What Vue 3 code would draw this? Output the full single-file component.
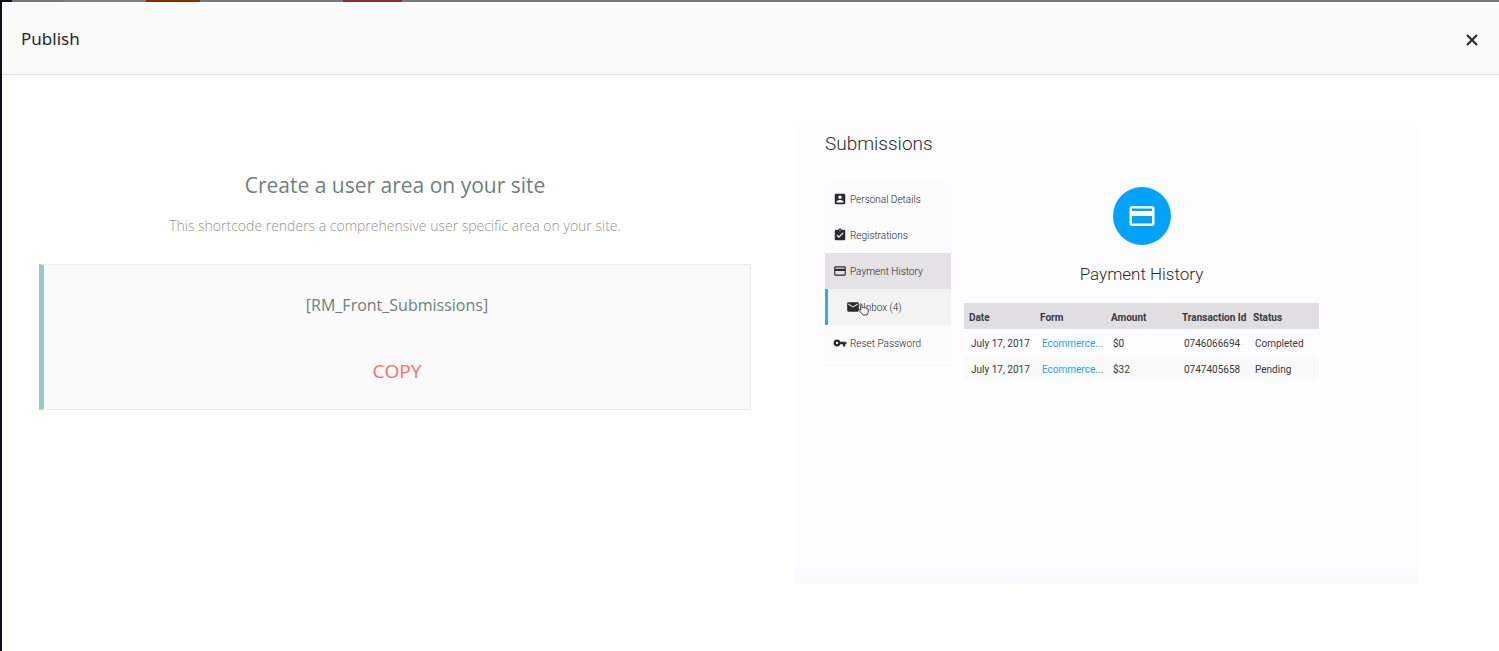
<script setup>
const items = [
  { id: 'personal', label: 'Personal Details' },
  { id: 'registrations', label: 'Registrations' },
  { id: 'payments', label: 'Payment History', active: true },
  { id: 'inbox', label: 'Inbox (4)', sub: true },
  { id: 'password', label: 'Reset Password' },
]
const heads = ['Date', 'Form', 'Amount', 'Transaction Id', 'Status']
const rows = [
  { date: 'July 17, 2017', form: 'Ecommerce...', amount: '$0', id: '0746066694', status: 'Completed' },
  { date: 'July 17, 2017', form: 'Ecommerce...', amount: '$32', id: '0747405658', status: 'Pending' },
]
</script>

<template>
  <div class="page">
    <div class="backdrop" aria-hidden="true">
      <i class="seg ink"></i><i class="seg tab"></i><i class="seg bar"></i><i class="seg orange"></i>
      <i class="seg mid"></i><i class="seg red"></i><i class="seg rest"></i>
    </div>
    <section class="modal" role="dialog" aria-labelledby="dialog-title">
      <header class="head">
        <h1 id="dialog-title">Publish</h1>
        <button class="close" type="button" aria-label="Close">
          <svg width="14" height="14" viewBox="0 0 14 14"><path d="M2 2l10 10M12 2L2 12" fill="none" stroke="#23282d" stroke-width="2" /></svg>
        </button>
      </header>
      <div class="body">
        <div class="info">
          <h2>Create a user area on your site</h2>
          <p class="desc">This shortcode renders a comprehensive user specific area on your site.</p>
          <div class="codebox">
            <div class="code">[RM_Front_Submissions]</div>
            <button class="copy" type="button">COPY</button>
          </div>
        </div>
        <div class="preview">
          <h3 class="ptitle">Submissions</h3>
          <div class="pgrid">
            <nav class="side">
              <a v-for="it in items" :key="it.id" href="#" class="item" :class="{ active: it.active, sub: it.sub }">
                <svg class="ico" width="14" height="14" viewBox="0 0 24 24" fill="#2c2b2f">
                  <path v-if="it.id === 'personal'" d="M3 5v14a2 2 0 0 0 2 2h14a2 2 0 0 0 2-2V5a2 2 0 0 0-2-2H5a2 2 0 0 0-2 2zm12 4a3 3 0 1 1-6 0 3 3 0 0 1 6 0zm-9 8c0-2 4-3.100 6-3.100s6 1.100 6 3.100v1H6v-1z" />
                  <path v-else-if="it.id === 'registrations'" d="M19 3h-4.180C14.400 1.840 13.300 1 12 1s-2.400.84-2.820 2H5a2 2 0 0 0-2 2v14a2 2 0 0 0 2 2h14a2 2 0 0 0 2-2V5a2 2 0 0 0-2-2zm-7 0a1 1 0 1 1 0 2 1 1 0 0 1 0-2zm-2 14l-4-4 1.410-1.410L10 14.170l6.590-6.590L18 9l-8 8z" />
                  <path v-else-if="it.id === 'payments'" d="M20 4H4a2 2 0 0 0-2 2v12a2 2 0 0 0 2 2h16a2 2 0 0 0 2-2V6a2 2 0 0 0-2-2zm0 14H4v-6h16v6zm0-10H4V6h16v2z" />
                  <path v-else-if="it.id === 'inbox'" d="M20 4H4a2 2 0 0 0-2 2v12a2 2 0 0 0 2 2h16a2 2 0 0 0 2-2V6a2 2 0 0 0-2-2zm0 4l-8 5-8-5V6l8 5 8-5v2z" />
                  <path v-else d="M12.650 10A6 6 0 0 0 7 6a6 6 0 1 0 5.650 8H17v4h4v-4h2v-4H12.650zM7 14a2 2 0 1 1 0-4 2 2 0 0 1 0 4z" />
                </svg>
                <span>{{ it.label }}</span>
                <svg v-if="it.sub" class="hand" width="12" height="13" viewBox="0 0 12 13">
                  <path d="M2 1.500c0-1 1.500-1 1.700 0l.5 3.500 1-.8 1.300.6 1.400-.1 1.200.8 1.100.5v3.500L9 12H5L1 7.500c-.4-.8.600-1.400 1.300-.8l.7.6z" fill="#f3f1f3" stroke="#444347" />
                </svg>
              </a>
            </nav>
            <div class="main">
              <div class="disc">
                <svg width="30" height="30" viewBox="0 0 24 24" fill="#fff"><path d="M20 4H4a2 2 0 0 0-2 2v12a2 2 0 0 0 2 2h16a2 2 0 0 0 2-2V6a2 2 0 0 0-2-2zm0 14H4v-6h16v6zm0-10H4V6h16v2z" /></svg>
              </div>
              <h4>Payment History</h4>
              <table>
                <thead>
                  <tr><th v-for="h in heads" :key="h" scope="col">{{ h }}</th></tr>
                </thead>
                <tbody>
                  <tr v-for="r in rows" :key="r.id">
                    <td>{{ r.date }}</td>
                    <td><a href="#">{{ r.form }}</a></td>
                    <td>{{ r.amount }}</td>
                    <td>{{ r.id }}</td>
                    <td>{{ r.status }}</td>
                  </tr>
                </tbody>
              </table>
            </div>
          </div>
        </div>
      </div>
    </section>
  </div>
</template>

<style>
body { margin: 0; background: #0c0e15; }
</style>

<style scoped>
* { box-sizing: border-box; }
h1, h2, h3, h4, p { margin: 0; font-weight: 400; }
a { text-decoration: none; color: inherit; }
button { border: 0; background: none; padding: 0; font: inherit; }
.page { min-height: 100vh; display: flex; flex-direction: column; font-family: "Open Sans", "Noto Sans", sans-serif; }
.backdrop { display: flex; height: 2px; }
.seg { flex: none; height: 2px; background: #7b7a7a; }
.ink { width: 12px; background: #0d1116; }
.tab { width: 51px; background: #777575; }
.bar { width: 83px; background: #817d7c; }
.orange { width: 54px; background: #833000; }
.mid { width: 143px; }
.red { width: 59px; background: #823035; }
.rest { flex: 1; }
.modal { flex: 1; margin-left: 2px; background: #fffffe; }
.head {
  display: flex; align-items: center; justify-content: space-between;
  height: 73px; padding: 0 20px 0 19px;
  background: #fafafb; border-bottom: 1px solid #e1e2e4; box-shadow: 0 2px 0 #fcfcfc;
}
h1 { padding-top: 2px; font-family: "Noto Sans", sans-serif; font-size: 17px; line-height: 24px; color: #23282d; }
.close { display: flex; padding-top: 4px; }
.body { display: grid; grid-template-columns: 712fr 625fr; gap: 43px; padding: 52px 80px 60px 37px; align-items: start; }
.info { padding-top: 42px; text-align: center; }
h2 { font-size: 21px; line-height: 32px; color: #6f7f7f; }
.desc { margin-top: 14px; font-size: 14px; line-height: 22px; font-weight: 300; color: #949494; }
.codebox {
  display: flex; flex-direction: column; align-items: center; gap: 40px;
  height: 146px; margin-top: 27px; padding-top: 27px;
  background: #fafafb; border: 1px solid #ececee; border-left: 5px solid #95cbc7;
}
.code { font-size: 16px; line-height: 26px; color: #6f7f7f; }
.copy { font-size: 19px; line-height: 26px; color: #ff6c6c; }
.preview {
  min-height: 457px; padding: 4px 20px 0 31px; font-family: Roboto, sans-serif;
  background: linear-gradient(to top, #f8f8f9, #fdfdff 16px, #fdfdff 120px, #fdfcff 124px);
}
.ptitle { font-size: 19px; line-height: 26px; font-weight: 300; color: #2c2b2f; }
.pgrid { display: grid; grid-template-columns: 126px minmax(0, 355px); gap: 13px; margin-top: 24px; align-items: start; }
.side { display: flex; flex-direction: column; background: #fcfbfc; }
.item {
  position: relative; display: flex; align-items: center; gap: 3px; height: 36px; padding-left: 8px;
  font-size: 10px; font-weight: 300; color: #1c1b1f; white-space: nowrap;
}
.active { background: #e4e2e5; }
.sub { padding-left: 18px; background: #f4f3f4; border-left: 3px solid #2fadea; }
.hand { position: absolute; left: 30px; top: 14px; }
.main { display: flex; flex-direction: column; align-items: center; padding-top: 6px; }
.disc { display: flex; align-items: center; justify-content: center; width: 58px; height: 58px; border-radius: 50%; background: #03a3fd; }
h4 { margin-top: 16px; font-size: 17px; line-height: 26px; font-weight: 300; color: #2c2b2f; }
table { width: 100%; margin-top: 16px; table-layout: fixed; border-collapse: collapse; font-size: 10px; color: #39383c; }
tr { height: 26px; }
th { padding: 2px 0 0 5px; text-align: left; font-weight: 700; background: #e0dee0; white-space: nowrap; }
td { padding: 2px 0 0 7px; white-space: nowrap; }
td a { color: #27a5ea; }
tbody tr:last-child { background: #faf9fa; }
</style>
